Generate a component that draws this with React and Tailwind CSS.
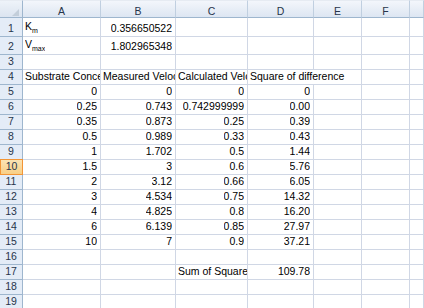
import React from 'react';

const COLS = ['A', 'B', 'C', 'D', 'E', 'F', ''];

// each row: array of cells for A..G; cell = { t, align, kind }
const num = (t) => ({ t, align: 'right' });
const txt = (t) => ({ t, align: 'left' });

const ROWS = [
    [{ t: 'K', sub: 'm', align: 'left' }, num('0.356650522')],
    [{ t: 'V', sub: 'max', align: 'left' }, num('1.802965348')],
    [],
    [txt('Substrate Concentration'), txt('Measured Velocity'), txt('Calculated Velocity'), { t: 'Square of difference', align: 'left', spill: true }],
    [num('0'), num('0'), num('0'), num('0')],
    [num('0.25'), num('0.743'), num('0.742999999'), num('0.00')],
    [num('0.35'), num('0.873'), num('0.25'), num('0.39')],
    [num('0.5'), num('0.989'), num('0.33'), num('0.43')],
    [num('1'), num('1.702'), num('0.5'), num('1.44')],
    [num('1.5'), num('3'), num('0.6'), num('5.76')],
    [num('2'), num('3.12'), num('0.66'), num('6.05')],
    [num('3'), num('4.534'), num('0.75'), num('14.32')],
    [num('4'), num('4.825'), num('0.8'), num('16.20')],
    [num('6'), num('6.139'), num('0.85'), num('27.97')],
    [num('10'), num('7'), num('0.9'), num('37.21')],
    [],
    [null, null, txt('Sum of Squares'), num('109.78')],
    [],
    [],
];

const SELECTED_ROW = 10;

const Cell = ({ cell }) => {
    if (!cell) return <div className="border-r border-b border-[#d0d7e5]" />;
    const right = cell.align === 'right';
    return (
        <div
            className={`flex items-end pb-[2px] whitespace-nowrap border-b border-[#d0d7e5] min-w-0
                ${cell.spill ? 'overflow-visible' : 'overflow-hidden border-r'}
                ${right ? 'justify-end pr-[3px]' : 'justify-start pl-[2px]'}`}
        >
            <span className={`leading-[12px] ${cell.spill ? '' : 'block overflow-hidden min-w-0 max-w-full'}`}>
                {cell.t}
                {cell.sub && <span className="relative top-[3px] text-[7px]">{cell.sub}</span>}
            </span>
        </div>
    );
};

export default function App() {
    return (
        <div
            className="w-[424px] h-[308px] overflow-hidden bg-white text-[10.5px] text-black"
            style={{ fontFamily: '"Liberation Sans", Arial, sans-serif' }}
        >
            <div className="grid grid-cols-[23px_78px_75px_72px_66px_48px_48px_1fr] grid-rows-[18px_19px_18px_repeat(17,15px)]">
                {/* corner */}
                <div className="relative border-t border-[#e6ebf2] border-r border-b border-r-[#9eb6ce] border-b-[#9eb6ce] bg-linear-to-b from-[#eef3f9] to-[#dbe4f0]">
                    <svg className="absolute left-[12px] top-[8px]" width="7" height="7" viewBox="0 0 7 7">
                        <polygon points="7,0 7,7 0,7" fill="#c3ceda" />
                    </svg>
                </div>
                {COLS.map((c, i) => (
                    <div
                        key={c + i}
                        className="flex items-end justify-center border-t border-t-[#e6ebf2] border-r border-r-[#c0cfe0] border-b border-b-[#9eb6ce] bg-linear-to-b from-[#f3f6fb] to-[#dde6f2] text-[#27354b]"
                    >
                        <span className="leading-[12px]">{c}</span>
                    </div>
                ))}

                {ROWS.map((row, r) => {
                    const n = r + 1;
                    const sel = n === SELECTED_ROW;
                    return (
                        <React.Fragment key={n}>
                            <div
                                className={`flex items-end justify-center pb-[2px] border-r border-b ${
                                    sel
                                        ? 'bg-linear-to-b from-[#fbe3b4] to-[#f8cf86] border-[#f29536] border-t border-l -mt-px'
                                        : 'bg-[#e4ecf7] border-r-[#9eb6ce] border-b-[#9eb6ce]'
                                } text-[#27354b]`}
                            >
                                <span className="leading-[12px]">{n}</span>
                            </div>
                            {COLS.map((c, i) => (
                                <Cell key={i} cell={row[i]} />
                            ))}
                        </React.Fragment>
                    );
                })}
            </div>
        </div>
    );
}
